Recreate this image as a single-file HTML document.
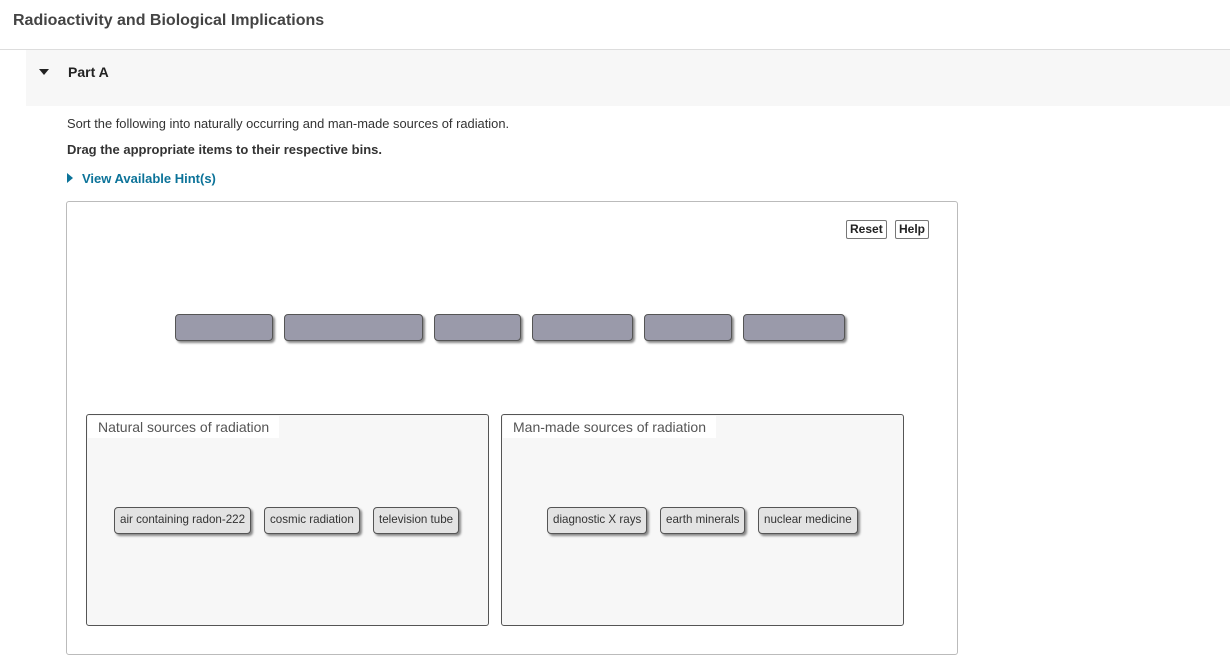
<!DOCTYPE html><html><head><style>
*{box-sizing:border-box}
body{margin:0;width:1230px;height:660px;background:#fff;font-family:"Liberation Sans",Arial,sans-serif;position:relative;overflow:hidden;color:#333}
.a{position:absolute}
.slot{position:absolute;top:314px;height:27px;background:#9a9aaa;border:1px solid #555;border-radius:4px;box-shadow:2px 2px 2px #888}
.bin{position:absolute;top:414px;height:212px;background:#f7f7f7;border:1px solid #555;border-radius:3px}
.lab{position:absolute;left:1px;top:1px;background:#fff;font-size:14px;color:#555;padding:3px 10px 3px 10px}
.it{position:absolute;top:507px;height:27px;background:#e3e3e3;border:1px solid #555;border-radius:4px;box-shadow:2px 2px 2px #888;font-size:11.6px;color:#333;line-height:24px;padding:0 5px;white-space:nowrap}
.btn{position:absolute;top:220px;height:19px;border:1px solid #777;border-radius:2px;font-size:12px;font-weight:bold;line-height:17px;padding:0 3px;color:#222;background:#fff}
</style></head><body>
<div class="a" style="left:13px;top:12px;font-size:16px;font-weight:bold;color:#444">Radioactivity and Biological Implications</div>
<div class="a" style="left:0;top:49px;width:1230px;height:1px;background:#ddd"></div>
<div class="a" style="left:26px;top:50px;width:1204px;height:56px;background:#f7f7f7"></div>
<div class="a" style="left:39px;top:69px;width:0;height:0;border-left:5px solid transparent;border-right:5px solid transparent;border-top:6px solid #222"></div>
<div class="a" style="left:68px;top:64px;font-size:14px;font-weight:bold;color:#222">Part A</div>
<div class="a" style="left:67px;top:116px;font-size:12.9px;color:#333">Sort the following into naturally occurring and man-made sources of radiation.</div>
<div class="a" style="left:67px;top:142px;font-size:13px;font-weight:bold;color:#333">Drag the appropriate items to their respective bins.</div>
<div class="a" style="left:67px;top:173px;width:0;height:0;border-top:5px solid transparent;border-bottom:5px solid transparent;border-left:6px solid #0c7399"></div>
<div class="a" style="left:82px;top:171px;font-size:13px;font-weight:bold;color:#0c7399">View Available Hint(s)</div>
<div class="a" style="left:66px;top:201px;width:892px;height:454px;border:1px solid #bbb;border-radius:3px"></div>
<div class="btn" style="left:846px">Reset</div>
<div class="btn" style="left:895px">Help</div>
<div class="slot" style="left:175px;width:98px"></div>
<div class="slot" style="left:284px;width:139px"></div>
<div class="slot" style="left:434px;width:87px"></div>
<div class="slot" style="left:532px;width:101px"></div>
<div class="slot" style="left:644px;width:88px"></div>
<div class="slot" style="left:743px;width:102px"></div>
<div class="bin" style="left:86px;width:403px"><div class="lab">Natural sources of radiation</div></div>
<div class="bin" style="left:501px;width:403px"><div class="lab">Man-made sources of radiation</div></div>
<div class="it" style="left:114px">air containing radon-222</div>
<div class="it" style="left:264px">cosmic radiation</div>
<div class="it" style="left:373px">television tube</div>
<div class="it" style="left:547px">diagnostic X rays</div>
<div class="it" style="left:660px">earth minerals</div>
<div class="it" style="left:758px">nuclear medicine</div>
</body></html>
